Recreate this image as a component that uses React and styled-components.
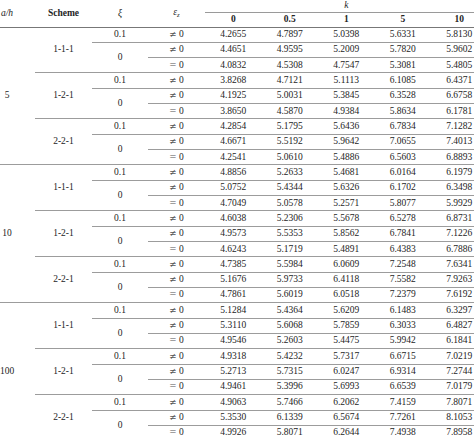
import React from 'react';
import styled, { createGlobalStyle } from 'styled-components';

const GlobalStyle = createGlobalStyle`
  html, body {
    margin: 0;
    padding: 0;
    background: #fff;
    overflow: hidden;
  }
`;

const Page = styled.div`
  width: 474px;
  height: 440px;
  overflow: hidden;
`;

const Table = styled.table`
  border-collapse: collapse;
  table-layout: fixed;
  width: 508px;
  margin-left: -21px;
  font-family: 'Liberation Serif', 'Times New Roman', serif;
  font-size: 9.5px;
  color: #242424;
`;

const HeadRow = styled.tr`
  height: ${p => p.$h}px;
`;

const HeadCell = styled.th`
  padding: 0;
  text-align: center;
  vertical-align: middle;
  font-weight: ${p => (p.$italic ? 'normal' : 'bold')};
  font-style: ${p => (p.$italic ? 'italic' : 'normal')};
  border-bottom: ${p => (p.$thin ? '1px solid #9a9a9a' : '1.5px solid #777')};
  line-height: 1;
`;

const Row = styled.tr`
  height: 15.33px;
`;

const Cell = styled.td`
  padding: 0;
  text-align: center;
  vertical-align: middle;
  border-bottom: 1px solid #9c9c9c;
  line-height: 1;
  white-space: nowrap;
`;

const Relation = styled.span`
  font-family: 'DejaVu Serif', 'Liberation Serif', serif;
  font-size: 0.92em;
  color: #555;
`;

const Sub = styled.sub`
  font-size: 0.7em;
  vertical-align: -0.25em;
`;

const schemes = ['1-1-1', '1-2-1', '2-2-1'];

const data = {
  5: [
    [
      ['4.2655', '4.7897', '5.0398', '5.6331', '5.8130'],
      ['4.4651', '4.9595', '5.2009', '5.7820', '5.9602'],
      ['4.0832', '4.5308', '4.7547', '5.3081', '5.4805'],
    ],
    [
      ['3.8268', '4.7121', '5.1113', '6.1085', '6.4371'],
      ['4.1925', '5.0031', '5.3845', '6.3528', '6.6758'],
      ['3.8650', '4.5870', '4.9384', '5.8634', '6.1781'],
    ],
    [
      ['4.2854', '5.1795', '5.6436', '6.7834', '7.1282'],
      ['4.6671', '5.5192', '5.9642', '7.0655', '7.4013'],
      ['4.2541', '5.0610', '5.4886', '6.5603', '6.8893'],
    ],
  ],
  10: [
    [
      ['4.8856', '5.2633', '5.4681', '6.0164', '6.1979'],
      ['5.0752', '5.4344', '5.6326', '6.1702', '6.3498'],
      ['4.7049', '5.0578', '5.2571', '5.8077', '5.9929'],
    ],
    [
      ['4.6038', '5.2306', '5.5678', '6.5278', '6.8731'],
      ['4.9573', '5.5353', '5.8562', '6.7841', '7.1226'],
      ['4.6243', '5.1719', '5.4891', '6.4383', '6.7886'],
    ],
    [
      ['4.7385', '5.5984', '6.0609', '7.2548', '7.6341'],
      ['5.1676', '5.9733', '6.4118', '7.5582', '7.9263'],
      ['4.7861', '5.6019', '6.0518', '7.2379', '7.6192'],
    ],
  ],
  100: [
    [
      ['5.1284', '5.4364', '5.6209', '6.1483', '6.3297'],
      ['5.3110', '5.6068', '5.7859', '6.3033', '6.4827'],
      ['4.9546', '5.2603', '5.4475', '5.9942', '6.1841'],
    ],
    [
      ['4.9318', '5.4232', '5.7317', '6.6715', '7.0219'],
      ['5.2713', '5.7315', '6.0247', '6.9314', '7.2744'],
      ['4.9461', '5.3996', '5.6993', '6.6539', '7.0179'],
    ],
    [
      ['4.9063', '5.7466', '6.2062', '7.4159', '7.8071'],
      ['5.3530', '6.1339', '6.5674', '7.7261', '8.1053'],
      ['4.9926', '5.8071', '6.2644', '7.4938', '7.8958'],
    ],
  ],
};

const kValues = ['0', '0.5', '1', '5', '10'];
const relations = ['\u2260', '\u2260', '='];

function Block({ ah }) {
  const rows = [];
  data[ah].forEach((group, g) => {
    group.forEach((values, r) => {
      rows.push(
        <Row key={`${ah}-${g}-${r}`}>
          {g === 0 && r === 0 && <Cell rowSpan={9}>{ah}</Cell>}
          {r === 0 && <Cell rowSpan={3}>{schemes[g]}</Cell>}
          {r === 0 && <Cell>0.1</Cell>}
          {r === 1 && <Cell rowSpan={2}>0</Cell>}
          <Cell>
            <Relation>{relations[r]}</Relation> 0
          </Cell>
          {values.map((v, i) => (
            <Cell key={i}>{v}</Cell>
          ))}
        </Row>
      );
    });
  });
  return rows;
}

export default function App() {
  return (
    <Page>
      <GlobalStyle />
      <Table>
        <colgroup>
          <col style={{ width: 56 }} />
          <col style={{ width: 57 }} />
          <col style={{ width: 56 }} />
          <col style={{ width: 57 }} />
          {kValues.map(k => (
            <col key={k} style={{ width: 56.5 }} />
          ))}
        </colgroup>
        <thead>
          <HeadRow $h={12}>
            <HeadCell rowSpan={2} $italic>
              a/h
            </HeadCell>
            <HeadCell rowSpan={2}>Scheme</HeadCell>
            <HeadCell rowSpan={2} $italic>
              ξ
            </HeadCell>
            <HeadCell rowSpan={2} $italic>
              ε<Sub>z</Sub>
            </HeadCell>
            <HeadCell colSpan={5} $italic $thin>
              k
            </HeadCell>
          </HeadRow>
          <HeadRow $h={15}>
            {kValues.map(k => (
              <HeadCell key={k}>{k}</HeadCell>
            ))}
          </HeadRow>
        </thead>
        <tbody>
          <Block ah={5} />
          <Block ah={10} />
          <Block ah={100} />
        </tbody>
      </Table>
    </Page>
  );
}
